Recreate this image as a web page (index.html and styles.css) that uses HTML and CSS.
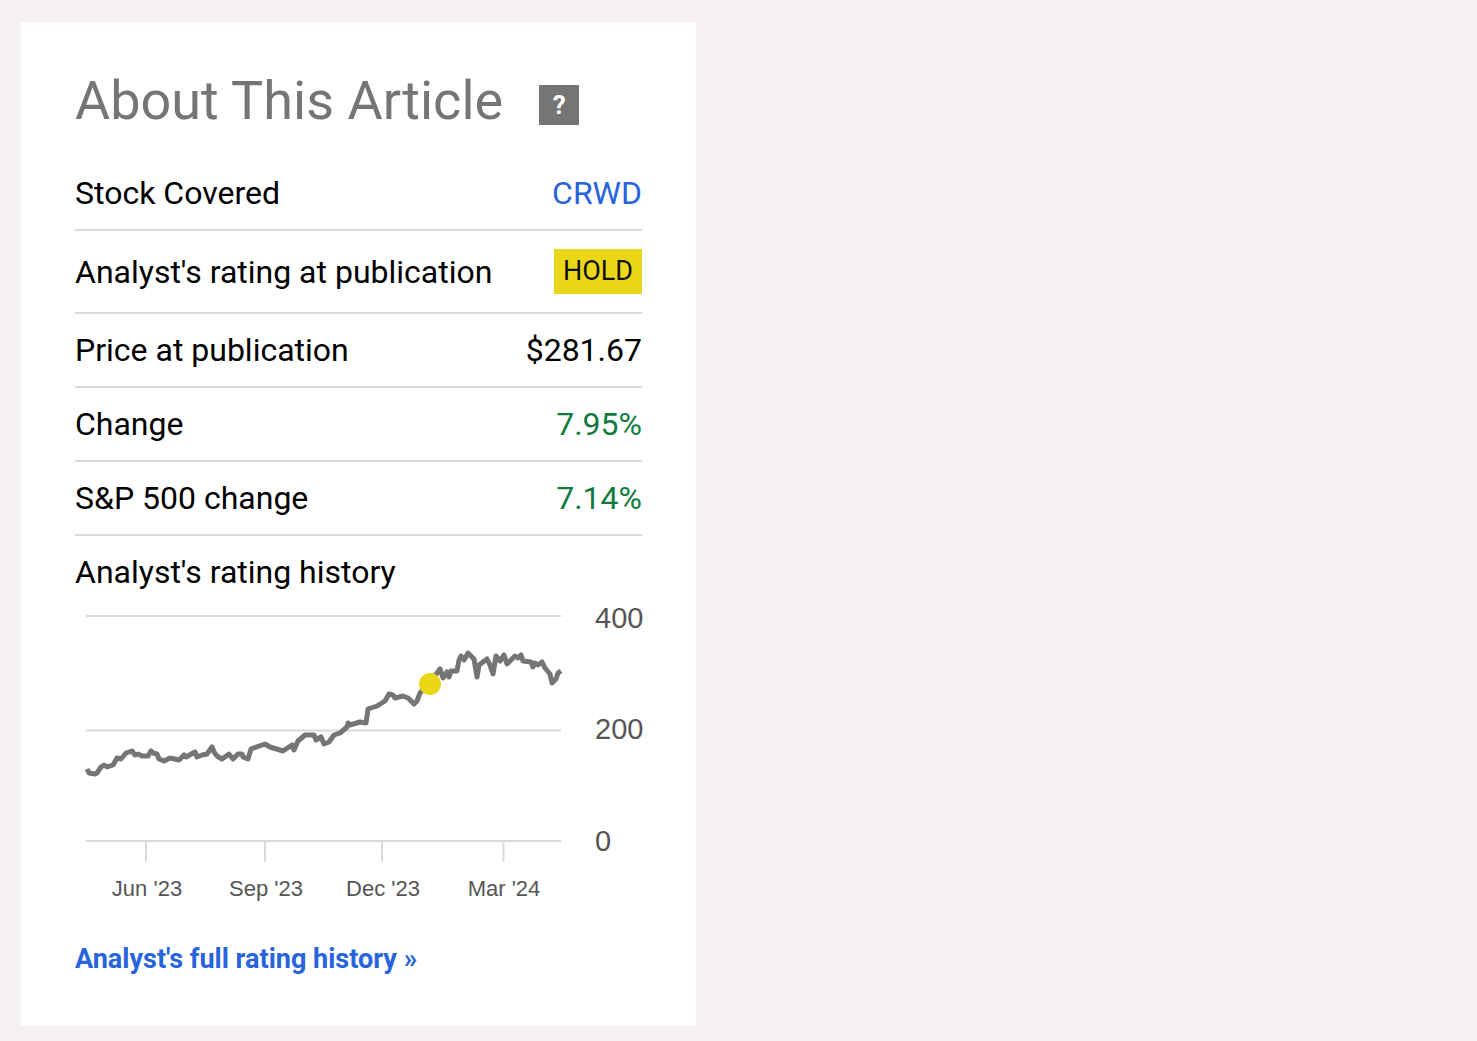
FILE: index.html
```html
<!DOCTYPE html>
<html lang="en">
<head>
<meta charset="utf-8">
<meta name="viewport" content="width=device-width, initial-scale=1">
<title>About This Article</title>
<link rel="stylesheet" href="styles.css">
</head>
<body>
<main class="card">
  <header class="card-header">
    <h1 class="title">About This Article</h1>
    <button class="help" type="button" aria-label="Help">?</button>
  </header>
  <table class="facts">
    <tbody>
      <tr><th scope="row">Stock Covered</th><td><a class="link" href="#crwd">CRWD</a></td></tr>
      <tr><th scope="row">Analyst's rating at publication</th><td><span class="badge">HOLD</span></td></tr>
      <tr><th scope="row">Price at publication</th><td>$281.67</td></tr>
      <tr><th scope="row">Change</th><td class="gain">7.95%</td></tr>
      <tr><th scope="row">S&amp;P 500 change</th><td class="gain">7.14%</td></tr>
    </tbody>
  </table>
  <h2 class="subtitle">Analyst's rating history</h2>
  <svg class="chart" viewBox="0 0 568 300" role="img" aria-label="Share price and rating history">
    <path class="grid" d="M11 8H486M11 122.500H486M11 233H486M71 233V254M190 233V254M307 233V254M428.500 233V254"/>
    <polyline class="price" points="12,161 14,165 20,166 22,165 26,159 29,157 32,159 38,157 42,150 46,151 51,145 57,143 60,147 63,146 67,148 73,148 76,143 78,145 82,146 84,151 89,153 95,150 104,152 109,147 111,149 120,144 122,149 127,147 132,146 137,139 139,144 142,148 147,151 154,146 158,151 163,146 167,146 168,149 173,151 176,141 190,136 195,139 208,143 217,137 219,142 223,133 230,127 239,127 241,132 246,129 249,136 254,134 259,127 265,125 272,119 273,115 275,117 285,114 291,115 293,101 302,98 310,93 314,86 318,87 320,90 328,88 333,90 339,96 342,93 345,85 355,74 362,65 365,61 368,70 372,64 374,69 376,63 382,63 384,52 386,48 389,52 393,45 399,51 402,69 404,57 412,51 415,57 418,66 421,48 425,53 429,47 432,56 440,48 443,50 446,47 448,53 456,54 458,59 460,55 463,57 467,54 470,60 475,66 477,75 481,71 483,65 486,63"/>
    <circle class="marker" cx="355" cy="76" r="11"/>
    <g class="y-labels">
      <text x="520" y="20">400</text>
      <text x="520" y="131">200</text>
      <text x="520" y="243">0</text>
    </g>
    <g class="x-labels">
      <text x="72" y="288">Jun '23</text>
      <text x="191" y="288">Sep '23</text>
      <text x="308" y="288">Dec '23</text>
      <text x="429" y="288">Mar '24</text>
    </g>
  </svg>
  <a class="link more" href="#history">Analyst's full rating history »</a>
</main>
</body>
</html>
```
FILE: styles.css
```css
* {
  box-sizing: border-box;
}

body {
  margin: 0;
  padding: 22px 21px 15px;
  background: #f5f1f0;
  color: #000;
  font-family: Roboto, "Liberation Sans", sans-serif;
  font-size: 32px;
  line-height: 36px;
}

.card {
  max-width: 675px;
  padding: 47px 54px 49px;
  background: #fff;
}

.card-header {
  display: flex;
  align-items: center;
  gap: 36px;
  padding-bottom: 24px;
}

.title {
  margin: 0;
  color: #757575;
  font-size: 54px;
  font-weight: 400;
  line-height: 64px;
}

.help {
  width: 40px;
  height: 40px;
  margin-top: 8px;
  padding: 0;
  border: 0;
  background: #757575;
  color: #fff;
  font-family: inherit;
  font-size: 26px;
  font-weight: 700;
  line-height: 40px;
}

.facts {
  width: 100%;
  border-spacing: 0;
}

.facts th,
.facts td {
  padding: 18px 0;
  border-bottom: 2px solid #d9d9d9;
  font-weight: 400;
  text-align: left;
}

.facts td {
  text-align: right;
}

.facts .gain {
  color: #0f7b40;
}

.link {
  color: #2864dc;
  text-decoration: none;
}

.badge {
  display: block;
  width: fit-content;
  margin-left: auto;
  padding: 0 9px;
  background: #ead718;
  color: #111;
  font-size: 27px;
  line-height: 45px;
}

.subtitle {
  margin: 0;
  padding: 18px 0;
  font-size: 32px;
  font-weight: 400;
}

.chart {
  display: block;
  width: calc(100% + 1px);
  overflow: visible;
  font-family: "Liberation Sans", Arial, sans-serif;
}

.grid {
  fill: none;
  stroke: #dadada;
  stroke-width: 2px;
}

.price {
  fill: none;
  stroke: #757575;
  stroke-width: 5px;
  stroke-linejoin: round;
}

.marker {
  fill: #ead718;
}

.y-labels,
.x-labels {
  fill: #555;
  font-size: 29px;
}

.x-labels {
  font-size: 22px;
  text-anchor: middle;
}

.more {
  display: block;
  padding-top: 33px;
  font-size: 27px;
  font-weight: 700;
}
```
